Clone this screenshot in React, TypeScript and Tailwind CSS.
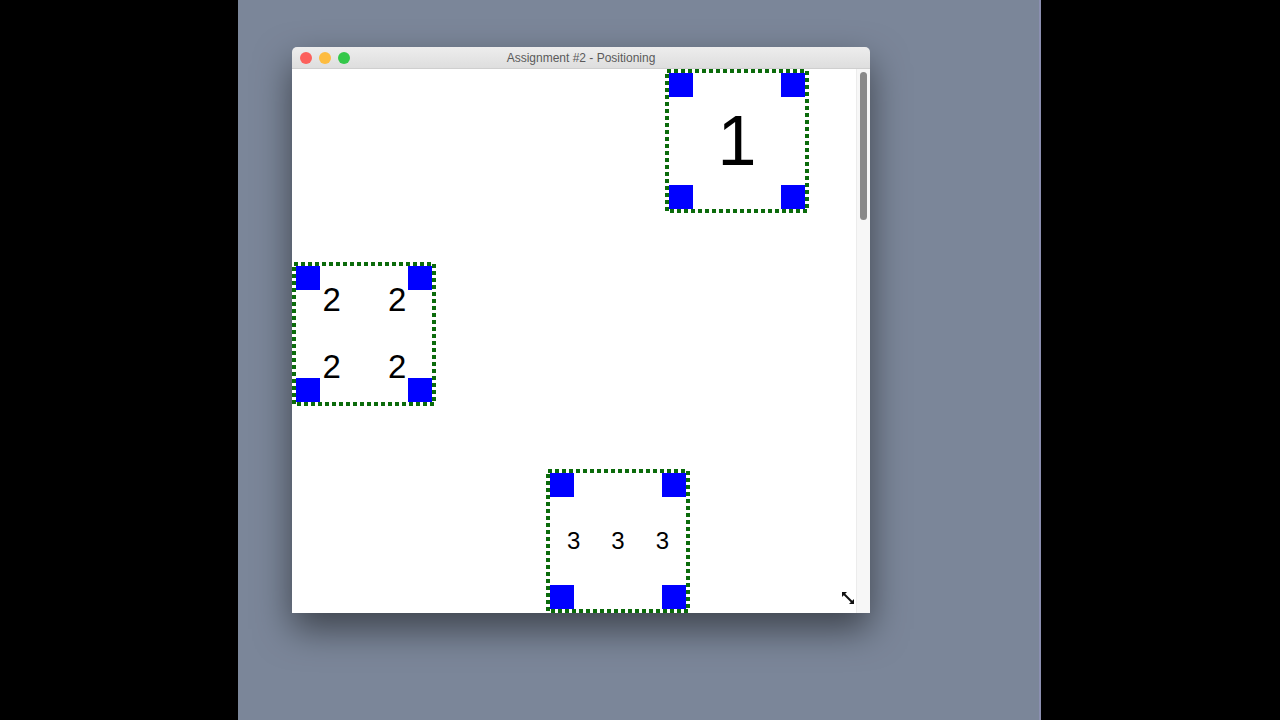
import React from 'react';

// a 144px box: dotted green frame, blue squares in the four inner corners,
// and whatever digits sit on top
const Box: React.FC<{ pos: string; children: React.ReactNode }> = ({ pos, children }) => (
  <div className={`absolute ${pos} w-[144px] h-[144px]`}>
    <div className="w-full h-full p-[4px] flex flex-col justify-between">
      <div className="flex justify-between">
        <div className="w-[24px] h-[24px] bg-[#0000ff]" />
        <div className="w-[24px] h-[24px] bg-[#0000ff]" />
      </div>
      <div className="flex justify-between">
        <div className="w-[24px] h-[24px] bg-[#0000ff]" />
        <div className="w-[24px] h-[24px] bg-[#0000ff]" />
      </div>
    </div>
    <svg className="absolute inset-0" width="144" height="144" viewBox="0 0 144 144">
      <rect x="2" y="2" width="140" height="140" fill="none" stroke="#0b6b0b" strokeWidth="4" strokeDasharray="4 3" />
    </svg>
    <div className="absolute inset-0 text-black leading-none">{children}</div>
  </div>
);

const App: React.FC = () => {
  return (
    <div className="w-[1280px] h-[720px] bg-black flex overflow-hidden font-['Liberation_Sans',Arial,sans-serif]">
      <div className="w-[238px] shrink-0" />

      {/* desktop */}
      <div className="relative w-[801px] shrink-0 bg-[#7b8699]">
        {/* window */}
        <div className="absolute left-[54px] top-[47px] w-[578px] h-[566px] flex flex-col rounded-t-[5px] overflow-hidden shadow-[0_16px_36px_rgba(0,0,0,0.5)]">
          <div className="relative h-[22px] shrink-0 bg-gradient-to-b from-[#ededed] to-[#dedede] border-b border-[#cfcfcf] flex items-center justify-center">
            <div className="absolute left-[8px] top-[5px] flex gap-[7px]">
              <span className="w-[12px] h-[12px] rounded-full bg-[#fc605c]" />
              <span className="w-[12px] h-[12px] rounded-full bg-[#fdbc40]" />
              <span className="w-[12px] h-[12px] rounded-full bg-[#34c84a]" />
            </div>
            <span className="text-[12px] text-[#5a5a5a]">Assignment #2 - Positioning</span>
          </div>

          <div className="flex-1 flex bg-white">
            <div className="relative flex-1 overflow-hidden">
              <Box pos="left-[373px] top-0">
                <div className="w-full h-full flex items-center justify-center text-[70px]">1</div>
              </Box>

              <Box pos="left-0 top-[193px]">
                <div className="w-full h-full pl-[7px] pr-[6px] pt-[4px] pb-[6px] grid grid-cols-2 grid-rows-2 text-[33px]">
                  <span className="flex items-center justify-center">2</span>
                  <span className="flex items-center justify-center">2</span>
                  <span className="flex items-center justify-center">2</span>
                  <span className="flex items-center justify-center">2</span>
                </div>
              </Box>

              <Box pos="left-[254px] top-[400px]">
                <div className="w-full h-full flex items-center justify-center gap-[31px] text-[24px]">
                  <span>3</span>
                  <span>3</span>
                  <span>3</span>
                </div>
              </Box>

              {/* resize cursor */}
              <svg className="absolute right-[1px] bottom-[8px]" width="14" height="14" viewBox="0 0 14 14">
                <path d="M2 2 L12 12" stroke="#111" strokeWidth="2" strokeLinecap="round" />
                <path d="M1 1 L6 1 L1 6 Z" fill="#111" />
                <path d="M13 13 L8 13 L13 8 Z" fill="#111" />
              </svg>
            </div>

            {/* scrollbar */}
            <div className="w-[14px] shrink-0 bg-[#f7f7f7] border-l border-[#ececec] pt-[3px] pl-[3px]">
              <div className="w-[7px] h-[148px] rounded-full bg-[#8a8a8a]" />
            </div>
          </div>
        </div>
      </div>

      <div className="w-[2px] shrink-0 bg-[#8b8fb0]" />
    </div>
  );
};

export default App;
